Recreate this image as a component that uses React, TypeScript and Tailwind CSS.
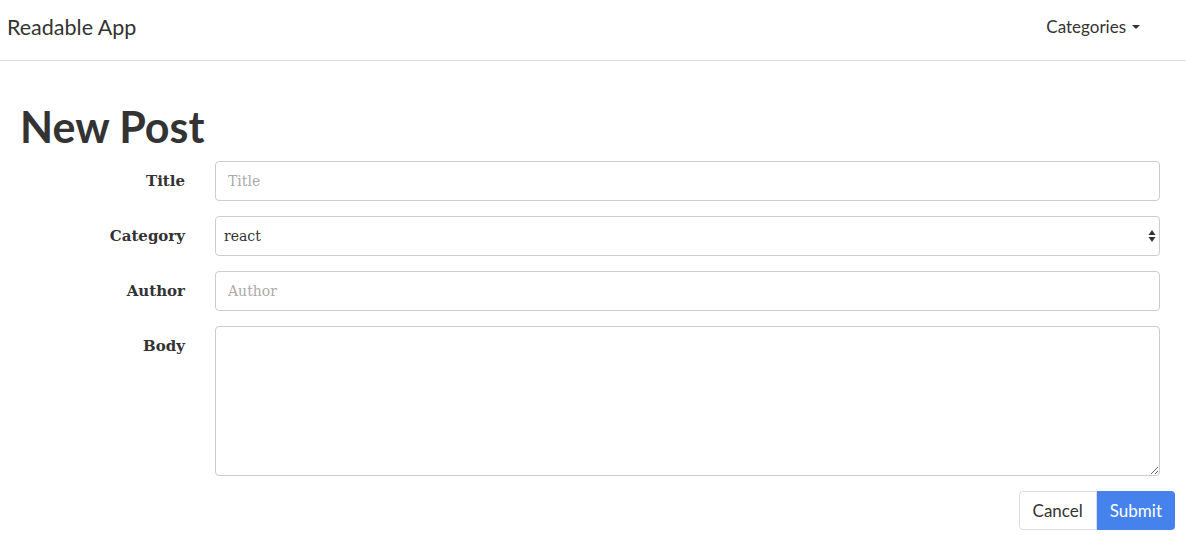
import React from 'react';

const sans = { fontFamily: 'Lato, "Noto Sans", sans-serif' };
const serif = { fontFamily: '"DejaVu Serif", Georgia, serif' };

const Field: React.FC<{ label: string; children: React.ReactNode }> = ({ label, children }) => (
  <div className="flex items-start mb-[15px]">
    <label className="w-[185px] text-right font-bold text-[15px] text-[#333] pt-[9px]" style={serif}>
      {label}
    </label>
    <div className="flex-1 ml-[30px]">{children}</div>
  </div>
);

const inputCls =
  'block w-full h-[40px] px-[12px] border border-[#ccc] rounded-[4px] text-[14px] text-[#333] placeholder:text-[#aaa] bg-white outline-none';

export default function App() {
  return (
    <div className="w-[1186px] min-h-[545px] bg-white text-[#333]">
      {/* Navbar */}
      <nav className="h-[61px] border-b border-[#ddd] flex items-start justify-between pt-[13px]" style={sans}>
        <span className="pl-[7px] text-[21.5px] leading-[28px] text-[#333]">Readable App</span>
        <span className="pr-[46px] text-[17px] leading-[28px] text-[#333] flex items-center">
          Categories
          <span className="ml-[6px] inline-block w-0 h-0 border-l-[4px] border-r-[4px] border-t-[4px] border-l-transparent border-r-transparent border-t-[#333]" />
        </span>
      </nav>

      <div className="pr-[26px]">
        <h1 className="pl-[20px] pt-[40px] pb-[8px] text-[43px] font-bold leading-[52px] text-[#333]" style={sans}>
          New Post
        </h1>

        <form>
          <Field label="Title">
            <input className={inputCls} style={serif} placeholder="Title" />
          </Field>
          <Field label="Category">
            <div className="relative">
              <select className={inputCls + ' appearance-none !px-[8px]'} style={serif} defaultValue="react">
                <option value="react">react</option>
                <option value="redux">redux</option>
                <option value="udacity">udacity</option>
              </select>
              <svg className="absolute right-[4px] top-[13px]" width="8" height="14" viewBox="0 0 8 14">
                <path d="M4 1 L7.5 6 H0.5 Z" fill="#333" />
                <path d="M4 13 L7.5 8 H0.5 Z" fill="#333" />
              </svg>
            </div>
          </Field>
          <Field label="Author">
            <input className={inputCls} style={serif} placeholder="Author" />
          </Field>
          <Field label="Body">
            <textarea className={inputCls + ' h-[150px] resize-y py-[8px]'} style={serif} />
          </Field>
        </form>
      </div>

      <div className="flex justify-end pr-[11px] mt-[1px]" style={sans}>
        <button className="h-[39px] px-[13px] border border-[#ddd] rounded-l-[4px] bg-white text-[17px] text-[#333]">
          Cancel
        </button>
        <button className="h-[39px] px-[13px] rounded-r-[4px] bg-[#4582ec] text-[17px] text-white">
          Submit
        </button>
      </div>
    </div>
  );
}
